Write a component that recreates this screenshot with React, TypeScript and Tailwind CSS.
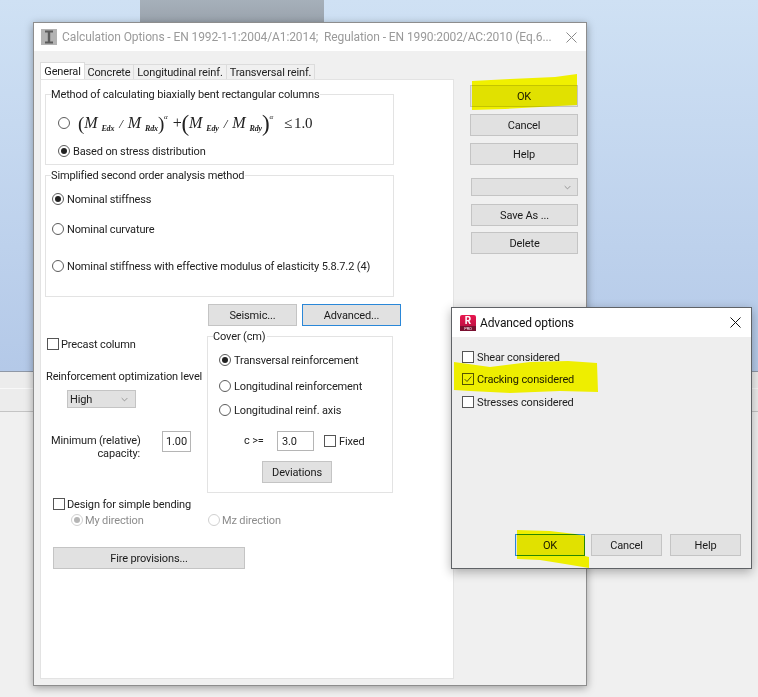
import React from "react";

const font = "font-['Roboto','Liberation_Sans',sans-serif]";

function Btn({ className = "", focus = false, children }: { className?: string; focus?: boolean; children: React.ReactNode }) {
  return (
    <div className={`flex items-center justify-center pt-[1px] bg-[#e1e1e1] text-[#1a1a1a] leading-none ${focus ? "border-[1.5px] border-[#2a87d8]" : "border border-[#c4c4c4]"} ${className}`}>
      {children}
    </div>
  );
}

function L({ children, className = "ml-[1px]" }: { children: React.ReactNode; className?: string }) {
  return <span className={`pt-[2px] whitespace-nowrap ${className}`}>{children}</span>;
}

function Radio({ on = false, off = false }: { on?: boolean; off?: boolean }) {
  return (
    <span className={`inline-flex items-center justify-center w-[12px] h-[12px] rounded-full border shrink-0 bg-white ${off ? "border-[#d0d0d0]" : "border-[#5c5c5c]"}`}>
      {on && <span className={`block w-[6px] h-[6px] rounded-full ${off ? "bg-[#b5b5b5]" : "bg-[#222]"}`} />}
    </span>
  );
}

function Check({ on = false }: { on?: boolean }) {
  return (
    <span className={`inline-flex items-center justify-center w-[12px] h-[12px] border border-[#555] shrink-0 ${on ? "bg-transparent" : "bg-white"}`}>
      {on && (
        <svg viewBox="0 0 12 12" className="w-[10px] h-[10px]" fill="none" stroke="#333" strokeWidth="1">
          <path d="M2 6.2 L4.8 9 L10 3" />
        </svg>
      )}
    </span>
  );
}

function Group({ title, className = "", children }: { title: string; className?: string; children: React.ReactNode }) {
  return (
    <div className={`relative border border-[#e3e3e3] ${className}`}>
      <span className="absolute left-[5px] top-[-7px] bg-white pr-[1px] leading-[13px] whitespace-nowrap">{title}</span>
      {children}
    </div>
  );
}

function Chevron() {
  return (
    <svg viewBox="0 0 10 6" className="w-[7px] h-[5px]" fill="none" stroke="#777" strokeWidth="1">
      <path d="M1 1 L5 5 L9 1" />
    </svg>
  );
}

function X({ color }: { color: string }) {
  return (
    <svg viewBox="0 0 11 11" className="w-[11px] h-[11px]" fill="none" stroke={color} strokeWidth="1">
      <path d="M0.5 0.5 L10.5 10.5 M10.5 0.5 L0.5 10.5" />
    </svg>
  );
}

function Formula() {
  const serif = "font-['Liberation_Serif',serif]";
  const M = ({ sub }: { sub: string }) => (
    <span className="inline-flex items-baseline">
      <i className="text-[16px]">M</i>
      <i className="text-[8px] font-bold ml-[4px] translate-y-[3px] inline-block">{sub}</i>
    </span>
  );
  const Sup = () => <i className="text-[7px] -translate-y-[6px] inline-block">α</i>;
  return (
    <span className={`${serif} inline-flex items-center text-[#222] whitespace-nowrap leading-none`}>
      <span className="text-[19px] font-light">(</span>
      <M sub="Edx" />
      <i className="text-[13px] mx-[5px]">/</i>
      <M sub="Rdx" />
      <span className="text-[19px] font-light">)</span>
      <Sup />
      <span className="text-[16px] ml-[5px]">+</span>
      <span className="text-[23px] font-light">(</span>
      <M sub="Edy" />
      <i className="text-[13px] mx-[5px]">/</i>
      <M sub="Rdy" />
      <span className="text-[23px] font-light">)</span>
      <Sup />
      <span className="text-[15px] ml-[11px]">≤</span>
      <span className="text-[15px] ml-[2px]">1.0</span>
    </span>
  );
}

export default function App() {
  return (
    <div className={`relative w-[758px] h-[697px] overflow-hidden bg-[#f0f0f0] text-[11px] tracking-[-0.14px] text-[#222] ${font}`}>
      {/* desktop behind */}
      <div className="h-[372px] bg-gradient-to-b from-[#cfe1f4] to-[#b4c9e8] border-b border-[#8f98a6]">
        <div className="ml-[140px] w-[184px] h-[22px] bg-gradient-to-b from-[#a6b0ba] to-[#9aa3ad]" />
      </div>
      <div className="h-[17px] bg-[#ececec] border-b border-[#f8f8f8]" />
      <div className="h-[23px] bg-[#ececec] border-b border-[#c4c4c4]" />

      {/* main window */}
      <div className="absolute left-[33px] top-[22px] w-[554px] h-[664px] bg-[#f0f0f0] border border-[#8d8d8d] shadow-[0_2px_8px_rgba(0,0,0,0.35)] flex flex-col">
        <div className="h-[28px] bg-white flex items-center pl-[7px] pr-[9px] shrink-0">
          <svg viewBox="0 0 16 16" className="w-[16px] h-[16px] shrink-0">
            <rect width="16" height="16" fill="#b3b3b3" />
            <path d="M4 1.5 H12 V3.5 H9.2 V12.5 H12 V14.5 H4 V12.5 H6.8 V3.5 H4 Z" fill="#5c5c5c" />
          </svg>
          <span className="ml-[5px] text-[12px] tracking-[-0.1px] text-[#9a9a9a] whitespace-pre">
            Calculation Options - EN 1992-1-1:2004/A1:2014;  Regulation - EN 1990:2002/AC:2010 (Eq.6...
          </span>
          <span className="ml-auto shrink-0"><X color="#8a8a8a" /></span>
        </div>

        <div className="flex flex-1 pl-[6px]">
          {/* tabs + page */}
          <div className="w-[414px] mt-[11px] flex flex-col">
            <div className="flex h-[17px] items-end leading-none whitespace-nowrap">
              <div className="w-[45px] h-[17px] bg-white border border-b-0 border-[#dcdcdc] flex items-center justify-center">General</div>
              <div className="w-[49px] h-[15px] bg-[#f0f0f0] border-t border-r border-[#dcdcdc] flex items-center justify-center">Concrete</div>
              <div className="w-[93px] h-[15px] bg-[#f0f0f0] border-t border-r border-[#dcdcdc] flex items-center justify-center">Longitudinal reinf.</div>
              <div className="w-[88px] h-[15px] bg-[#f0f0f0] border-t border-r border-[#dcdcdc] flex items-center justify-center">Transversal reinf.</div>
            </div>
            <div className="bg-white border border-[#e3e3e3] h-[600px] pl-[4px] pt-[14px]">
              <Group title="Method of calculating biaxially bent rectangular columns" className="w-[349px] h-[71px] pl-[12px]">
                <div className="flex items-center gap-[8px] h-[26px] mt-[15px]">
                  <Radio />
                  <Formula />
                </div>
                <div className="flex items-center gap-[2px] h-[14px] mt-[8px]">
                  <Radio on />
                  <L>Based on stress distribution</L>
                </div>
              </Group>

              <Group title="Simplified second order analysis method" className="w-[349px] h-[122px] mt-[10px] pl-[6px]">
                <div className="flex items-center gap-[2px] h-[14px] mt-[16px]"><Radio on /><L>Nominal stiffness</L></div>
                <div className="flex items-center gap-[2px] h-[14px] mt-[16px]"><Radio /><L>Nominal curvature</L></div>
                <div className="flex items-center gap-[2px] h-[14px] mt-[23px]"><Radio /><L>Nominal stiffness with effective modulus of elasticity 5.8.7.2 (4)</L></div>
              </Group>

              <div className="flex ml-[163px] mt-[7px] gap-[5px]">
                <Btn className="w-[89px] h-[22px]">Seismic...</Btn>
                <Btn focus className="w-[99px] h-[22px]">Advanced...</Btn>
              </div>

              <div className="flex mt-[10px]">
                <div className="w-[162px] shrink-0">
                  <div className="flex items-center gap-[2px] h-[14px] ml-[2px] mt-[1px]"><Check /><L className="">Precast column</L></div>
                  <div className="mt-[19px] ml-[1px] leading-[14px] whitespace-nowrap">Reinforcement optimization level</div>
                  <div className="ml-[22px] mt-[6px] w-[69px] h-[18px] bg-[#e1e1e1] border border-[#c4c4c4] flex items-center justify-between pl-[2px] pr-[7px]">
                    <L className="">High</L><Chevron />
                  </div>
                  <div className="flex mt-[23px] ml-[6px]">
                    <div className="w-[89px] text-right leading-[13px] mt-[3px] whitespace-nowrap">
                      <div className="text-left">Minimum (relative)</div>
                      <div>capacity:</div>
                    </div>
                    <div className="ml-[22px] w-[29px] h-[21px] bg-white border border-[#b5b5b5] flex items-center justify-center leading-none">1.00</div>
                  </div>
                </div>
                <Group title="Cover (cm)" className="w-[186px] h-[157px] pl-[11px]">
                  <div className="flex items-center gap-[2px] h-[14px] mt-[16px]"><Radio on /><L>Transversal reinforcement</L></div>
                  <div className="flex items-center gap-[2px] h-[14px] mt-[12px]"><Radio /><L>Longitudinal reinforcement</L></div>
                  <div className="flex items-center gap-[2px] h-[14px] mt-[10px]"><Radio /><L>Longitudinal reinf. axis</L></div>
                  <div className="flex items-center mt-[14px] ml-[25px]">
                    <span className="w-[33px]">c &gt;=</span>
                    <div className="w-[37px] h-[20px] bg-white border border-[#b5b5b5] flex items-center pl-[4px] leading-none">3.0</div>
                    <span className="ml-[10px] flex"><Check /></span>
                    <L className="ml-[3px]">Fixed</L>
                  </div>
                  <Btn className="w-[70px] h-[22px] ml-[43px] mt-[10px]">Deviations</Btn>
                </Group>
              </div>

              <div className="flex items-center gap-[2px] h-[14px] ml-[8px] mt-[4px]"><Check /><L className="">Design for simple bending</L></div>
              <div className="flex items-center h-[14px] ml-[26px] mt-[2px] text-[#8c8c8c]">
                <div className="flex items-center gap-[2px] w-[137px]"><Radio on off /><L className="">My direction</L></div>
                <div className="flex items-center gap-[2px]"><Radio off /><L className="">Mz direction</L></div>
              </div>
              <Btn className="w-[192px] h-[22px] ml-[8px] mt-[20px]">Fire provisions...</Btn>
            </div>
          </div>

          {/* side buttons */}
          <div className="ml-[16px] w-[108px] mt-[34px] flex flex-col">
            <Btn className="h-[22px]">OK</Btn>
            <Btn className="h-[22px] mt-[7px]">Cancel</Btn>
            <Btn className="h-[22px] mt-[7px]">Help</Btn>
            <div className="h-[18px] ml-[1px] mt-[13px] bg-[#e1e1e1] border border-[#c4c4c4] flex items-center justify-end pr-[6px]"><Chevron /></div>
            <Btn className="h-[22px] ml-[1px] mt-[8px]">Save As ...</Btn>
            <Btn className="h-[22px] ml-[1px] mt-[6px]">Delete</Btn>
          </div>
        </div>
      </div>

      {/* advanced options dialog */}
      <div className="absolute left-[451px] top-[307px] w-[301px] h-[262px] bg-[#eeeeee] border border-[#5f6266] shadow-[0_3px_10px_rgba(0,0,0,0.3)] flex flex-col">
        <div className="h-[29px] bg-white flex items-center pl-[8px] pr-[10px] shrink-0">
          <div className="relative w-[16px] h-[16px] rounded-[2px] bg-gradient-to-b from-[#e8174f] to-[#b01040] flex flex-col items-center leading-none text-white">
            <span className="text-[10px] font-bold leading-[11px]">R</span>
            <span className="absolute bottom-0 left-0 right-0 h-[5px] bg-[#7a1030] text-[4px] leading-[5px] text-center">PRO</span>
          </div>
          <span className="ml-[4px] text-[12px] text-[#111]">Advanced options</span>
          <span className="ml-auto"><X color="#111" /></span>
        </div>
        <div className="pl-[10px] pt-[13px]">
          <div className="flex items-center gap-[2px] h-[14px]"><Check /><L>Shear considered</L></div>
          <div className="flex items-center gap-[2px] h-[14px] mt-[8px]"><Check on /><L>Cracking considered</L></div>
          <div className="flex items-center gap-[2px] h-[14px] mt-[9px]"><Check /><L>Stresses considered</L></div>
        </div>
        <div className="flex mt-auto mb-[12px] ml-[63px]">
          <Btn focus className="w-[70px] h-[22px]">OK</Btn>
          <Btn className="w-[71px] h-[22px] ml-[6px]">Cancel</Btn>
          <Btn className="w-[71px] h-[22px] ml-[8px]">Help</Btn>
        </div>
      </div>

      {/* highlighter marks */}
      <svg className="absolute inset-0 w-[758px] h-[697px] pointer-events-none mix-blend-multiply" viewBox="0 0 758 697">
        <g fill="#ffff00">
          <path d="M472 81 L510 79 L555 77 L577 74 L577 105 L540 107 L505 109 L472 110 Z" />
          <path d="M454 362 L490 367 L530 362 L568 361 L597 363 L598 392 L560 391 L510 393 L470 391 L454 390 Z" />
          <path d="M517 530 L550 531 L575 534 L585 536 L585 556 L589 557 L589 568 L565 564 L540 560 L517 559 Z" />
        </g>
      </svg>
    </div>
  );
}
